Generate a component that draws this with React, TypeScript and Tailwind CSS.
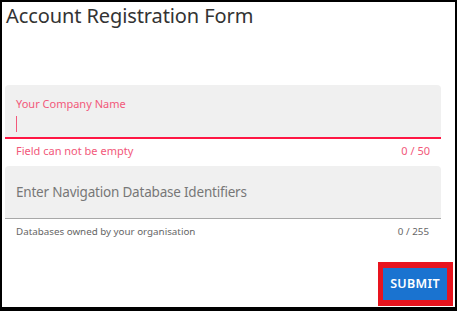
export default function App() {
  return (
    <div
      className="w-[457px] h-[311px] border-2 border-b-4 border-black bg-white flex flex-col text-[#333]"
      style={{ fontFamily: '"Noto Sans", "Open Sans", sans-serif' }}
    >
      {/* Title */}
      <h1 className="pl-1 pt-[1px] text-[20px] leading-[26px] text-[#333] tracking-[-0.1px]">
        Account Registration Form
      </h1>

      <div className="mt-[56px] pl-[3px] pr-[14px] flex flex-col">
        {/* Company name field (error state) */}
        <div className="h-[54px] rounded-t-[4px] bg-[#f0f0f0] border-b-2 border-[#ff1744] pl-[11px] pt-[12px]">
          <div className="text-[11px] leading-[14px] text-[#f2587a]">Your Company Name</div>
          <div className="mt-[5px] h-[16px] w-[1px] bg-[#f2587a]" />
        </div>
        <div className="flex justify-between pl-[11px] pr-[11px] pt-[5px] text-[11px] leading-[14px] text-[#f2587a]">
          <span>Field can not be empty</span>
          <span>0 / 50</span>
        </div>

        {/* Navigation database field */}
        <div className="mt-[8px] h-[53px] rounded-t-[4px] bg-[#f0f0f0] border-b border-[#a8a8a8] pl-[11px] flex items-center">
          <span className="text-[13.5px] text-[#777] tracking-[-0.2px]">Enter Navigation Database Identifiers</span>
        </div>
        <div className="flex justify-between pl-[11px] pr-[12px] pt-[6px] text-[9.8px] leading-[13px] text-[#666]">
          <span>Databases owned by your organisation</span>
          <span>0 / 255</span>
        </div>
      </div>

      {/* Submit */}
      <div className="mt-auto mb-[1px] flex justify-end pr-[2px]">
        <div className="border-[6px] border-[#e8141e] border-l-[5px]">
          <button className="h-[32px] w-[64px] bg-[#1a73d0] text-white text-[12.5px] font-semibold tracking-[0.3px]">
            SUBMIT
          </button>
        </div>
      </div>
    </div>
  );
}
